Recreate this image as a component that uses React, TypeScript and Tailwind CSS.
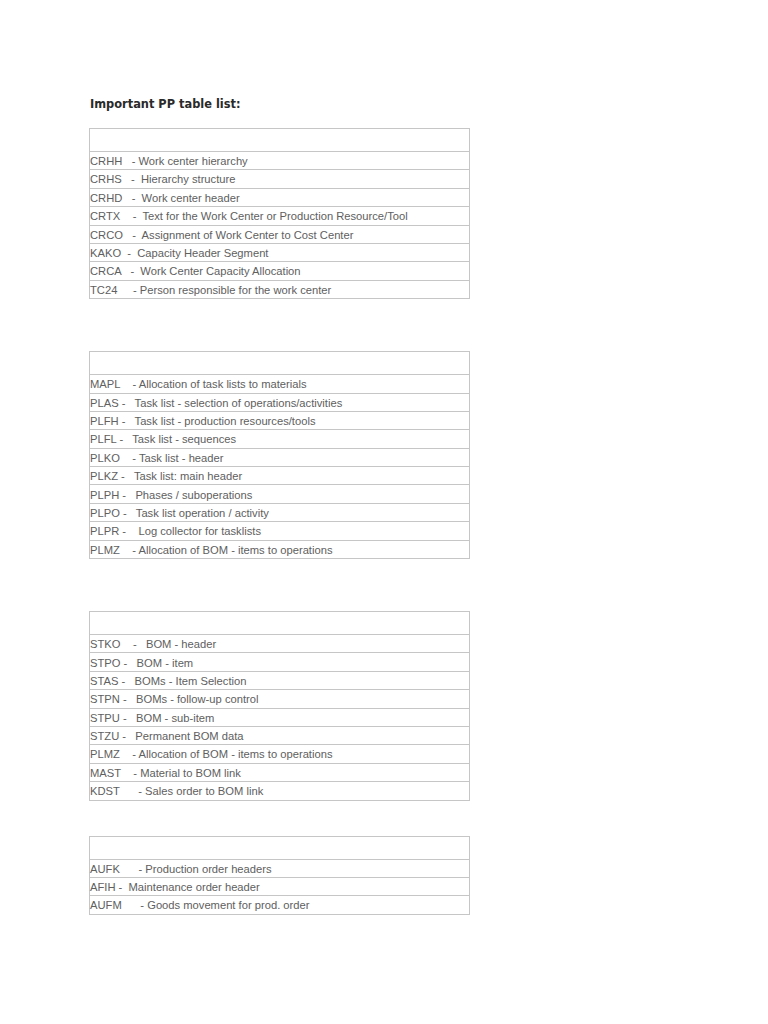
const tables: string[][] = [
  [
    'CRHH   - Work center hierarchy',
    'CRHS   -  Hierarchy structure',
    'CRHD   -  Work center header',
    'CRTX    -  Text for the Work Center or Production Resource/Tool',
    'CRCO   -  Assignment of Work Center to Cost Center',
    'KAKO  -  Capacity Header Segment',
    'CRCA   -  Work Center Capacity Allocation',
    'TC24     - Person responsible for the work center',
  ],
  [
    'MAPL    - Allocation of task lists to materials',
    'PLAS -   Task list - selection of operations/activities',
    'PLFH -   Task list - production resources/tools',
    'PLFL -   Task list - sequences',
    'PLKO    - Task list - header',
    'PLKZ -   Task list: main header',
    'PLPH -   Phases / suboperations',
    'PLPO -   Task list operation / activity',
    'PLPR -    Log collector for tasklists',
    'PLMZ    - Allocation of BOM - items to operations',
  ],
  [
    'STKO    -   BOM - header',
    'STPO -   BOM - item',
    'STAS -   BOMs - Item Selection',
    'STPN -   BOMs - follow-up control',
    'STPU -   BOM - sub-item',
    'STZU -   Permanent BOM data',
    'PLMZ    - Allocation of BOM - items to operations',
    'MAST    - Material to BOM link',
    'KDST      - Sales order to BOM link',
  ],
  [
    'AUFK      - Production order headers',
    'AFIH -  Maintenance order header',
    'AUFM      - Goods movement for prod. order',
  ],
];

// space above each table, in px
const gaps = ['mt-[17px]', 'mt-[52px]', 'mt-[52px]', 'mt-[35px]'];

function TableBlock({ rows, gap }: { rows: string[]; gap: string }) {
  return (
    <div className={`${gap} w-[381px] border border-[#c6c6c6]`}>
      <div className="h-[22px]" />
      {rows.map((row, i) => (
        <div
          key={i}
          className="flex h-[18.4px] items-center border-t border-[#c6c6c6] pt-[2px] whitespace-pre text-[11.2px] leading-none text-[#606060]"
        >
          {row}
        </div>
      ))}
    </div>
  );
}

export default function App() {
  return (
    <div className="min-h-[1024px] w-[768px] bg-white pl-[89px] pt-[98px] font-['Liberation_Sans',Arial,sans-serif]">
      <h1 className="pl-px font-['DejaVu_Sans',Verdana,sans-serif] text-[11.4px] font-bold leading-[13px] text-[#2a2a2a]">
        Important PP table list:
      </h1>
      {tables.map((rows, i) => (
        <TableBlock key={i} rows={rows} gap={gaps[i]} />
      ))}
    </div>
  );
}
